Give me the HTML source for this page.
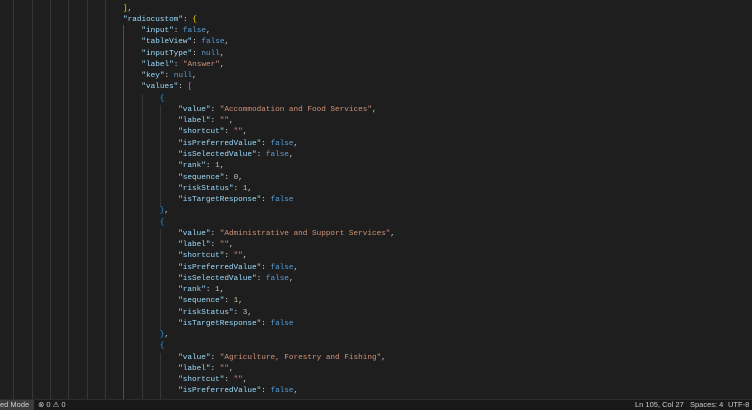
<!DOCTYPE html>
<html><head><meta charset="utf-8"><style>
body{margin:0;width:752px;height:409px;background:#1e1e1e;overflow:hidden;position:relative;font-family:"Liberation Mono",monospace;}
.g{position:absolute;width:1px;background:#363636;}
.l{position:absolute;white-space:pre;font-size:7.7px;line-height:11px;color:#d4d4d4;}
.k{color:#9cdcfe}.s{color:#ce9178}.b{color:#569cd6}.n{color:#b5cea8}.y{color:#ffd700}.p{color:#da70d6}.c{color:#179fff}
#sb{position:absolute;left:0;top:399px;width:752px;height:10px;background:#181818;border-top:1px solid #2b2b2b;font-family:"Liberation Sans",sans-serif;font-size:7.5px;color:#ccc;line-height:10px;}
</style></head><body>
<div class="g" style="left:13px;top:0;height:399px"></div>
<div class="g" style="left:32px;top:0;height:399px"></div>
<div class="g" style="left:50px;top:0;height:399px"></div>
<div class="g" style="left:68px;top:0;height:399px"></div>
<div class="g" style="left:87px;top:0;height:399px"></div>
<div class="g" style="left:105px;top:0;height:399px"></div>
<div class="g" style="left:123px;top:25px;height:374px;background:#505050"></div>
<div class="g" style="left:142px;top:94px;height:305px"></div>
<div class="g" style="left:160px;top:105px;height:102px"></div>
<div class="g" style="left:160px;top:229px;height:102px"></div>
<div class="g" style="left:160px;top:353px;height:46px"></div>
<div id="lines"></div>
<script>
var L=[
[6,'<span class="y">]</span>,'],
[6,'<span class="k">"radiocustom"</span>: <span class="y">{</span>'],
[7,'<span class="k">"input"</span>: <span class="b">false</span>,'],
[7,'<span class="k">"tableView"</span>: <span class="b">false</span>,'],
[7,'<span class="k">"inputType"</span>: <span class="b">null</span>,'],
[7,'<span class="k">"label"</span>: <span class="s">"Answer"</span>,'],
[7,'<span class="k">"key"</span>: <span class="b">null</span>,'],
[7,'<span class="k">"values"</span>: <span class="p">[</span>'],
];
function blk(v,r,seq,risk,last){
 L.push([8,'<span class="c">{</span>']);
 L.push([9,'<span class="k">"value"</span>: <span class="s">"'+v+'"</span>,']);
 L.push([9,'<span class="k">"label"</span>: <span class="s">""</span>,']);
 L.push([9,'<span class="k">"shortcut"</span>: <span class="s">""</span>,']);
 L.push([9,'<span class="k">"isPreferredValue"</span>: <span class="b">false</span>,']);
 if(last)return;
 L.push([9,'<span class="k">"isSelectedValue"</span>: <span class="b">false</span>,']);
 L.push([9,'<span class="k">"rank"</span>: <span class="n">'+r+'</span>,']);
 L.push([9,'<span class="k">"sequence"</span>: <span class="n">'+seq+'</span>,']);
 L.push([9,'<span class="k">"riskStatus"</span>: <span class="n">'+risk+'</span>,']);
 L.push([9,'<span class="k">"isTargetResponse"</span>: <span class="b">false</span>']);
 L.push([8,'<span class="c">}</span>,']);
}
blk("Accommodation and Food Services",1,0,1);
blk("Administrative and Support Services",1,1,3);
blk("Agriculture, Forestry and Fishing",1,2,1,true);
var h='';
L.forEach(function(x,i){h+='<div class="l" style="top:'+(3.6+i*11.26)+'px;left:'+(123+(x[0]-6)*18.4)+'px">'+x[1]+'</div>';});
document.getElementById('lines').innerHTML=h;
</script>
<div id="sb">
<span style="position:absolute;left:0;top:0;width:34px;height:10px;background:#3c3c3c">ed Mode</span>
<span style="position:absolute;left:38px;">⊗ 0 ⚠ 0</span>
<span style="position:absolute;left:635px;">Ln 105, Col 27</span>
<span style="position:absolute;left:690px;">Spaces: 4</span>
<span style="position:absolute;left:728px;">UTF-8</span>
</div>
</body></html>
